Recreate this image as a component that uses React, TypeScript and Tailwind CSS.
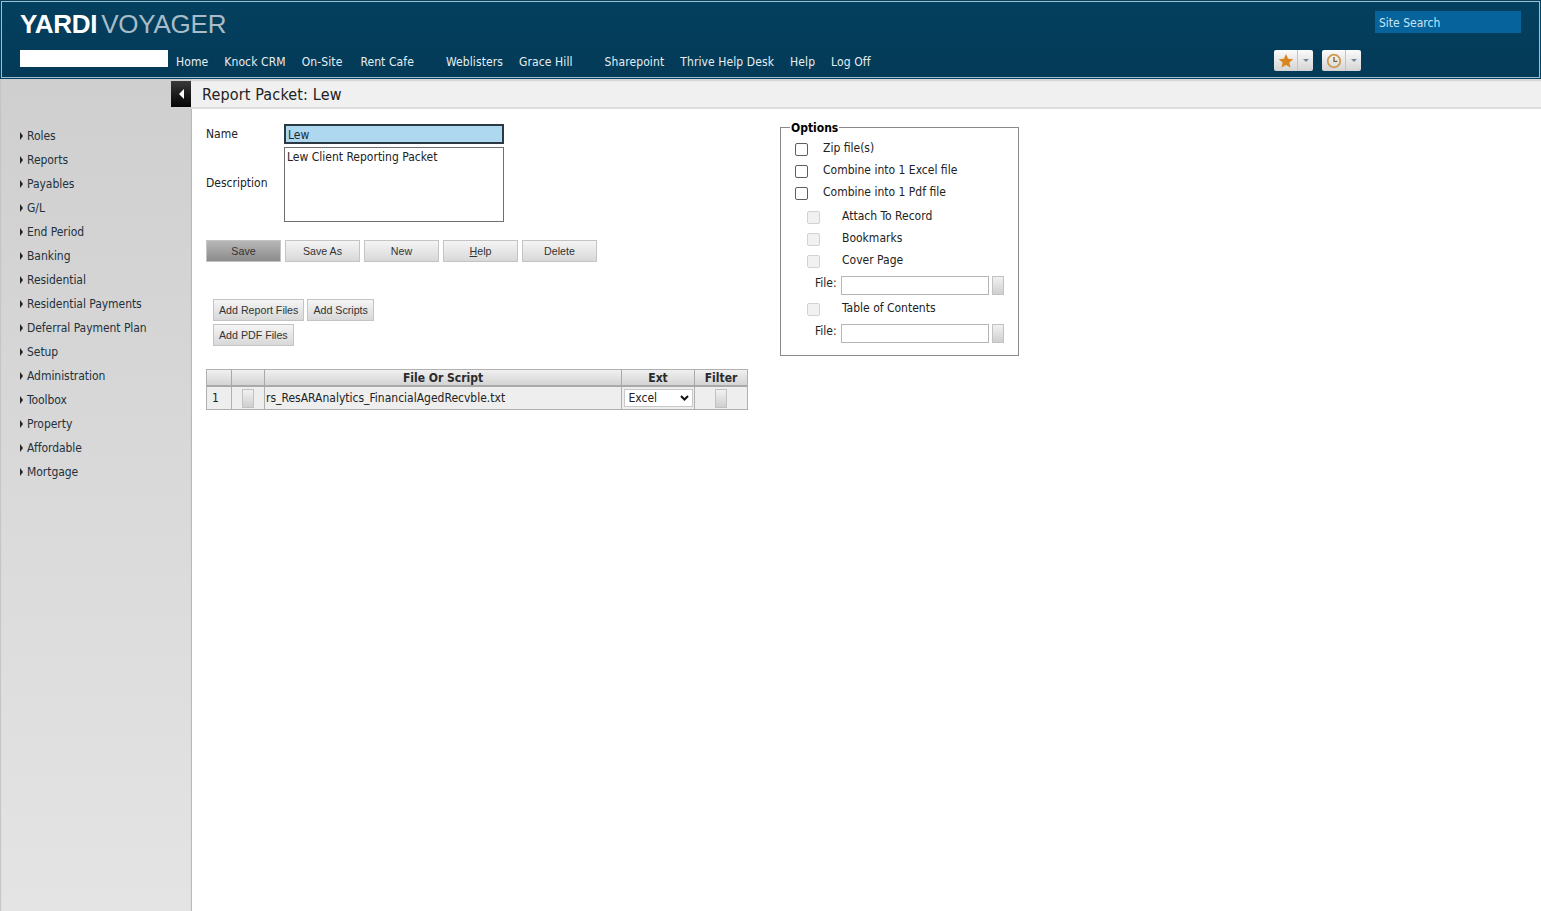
const uiFont = "[font-family:'DejaVu_Sans_Condensed','DejaVu_Sans',sans-serif] [font-stretch:condensed]"

const navItems = [
  { label: 'Home', gap: '' },
  { label: 'Knock CRM', gap: '' },
  { label: 'On-Site', gap: '' },
  { label: 'Rent Cafe', gap: 'ml-[2px]' },
  { label: 'Weblisters', gap: 'ml-[16px]' },
  { label: 'Grace Hill', gap: '' },
  { label: 'Sharepoint', gap: 'ml-[16px]' },
  { label: 'Thrive Help Desk', gap: '' },
  { label: 'Help', gap: '' },
  { label: 'Log Off', gap: '' },
]

const sideItems = [
  'Roles',
  'Reports',
  'Payables',
  'G/L',
  'End Period',
  'Banking',
  'Residential',
  'Residential Payments',
  'Deferral Payment Plan',
  'Setup',
  'Administration',
  'Toolbox',
  'Property',
  'Affordable',
  'Mortgage',
]

const HeaderDropdown = ({ children }: { children: React.ReactNode }) => (
  <div className="flex h-[21px] w-[39px] rounded-[2px] bg-gradient-to-b from-[#fbfbfb] to-[#d4d4d4]">
    <div className="flex w-[24px] items-center justify-center border-r border-[#c4c4c4]">{children}</div>
    <div className="flex flex-1 items-center justify-center">
      <span className="h-0 w-0 border-x-[3px] border-t-[3px] border-x-transparent border-t-[#72889c]" />
    </div>
  </div>
)

const Header = () => (
  <header className="flex h-[79px] shrink-0 flex-col justify-between border border-[#04405f] bg-gradient-to-b from-[#04405f] to-[#033a57] px-[19px] shadow-[inset_0_0_0_1px_#9fc0cc]">
    <div className="flex items-start justify-between">
      <div className="mt-[8px] flex font-['Liberation_Sans',sans-serif] text-[26px] leading-[30px] tracking-[-0.25px]">
        <span className="font-bold text-white">YARDI</span>
        <span className="ml-[4px] text-[#a9bcc7]">VOYAGER</span>
      </div>
      <div className={`mt-[10px] flex h-[22px] w-[146px] items-center bg-[#06639c] px-[4px] pt-[2px] text-[12px] text-[#c6e4f5] ${uiFont}`}>
        Site Search
      </div>
    </div>
    <div className="mb-[6px] flex items-end">
      <div className="mb-[5px] h-[17px] w-[148px] bg-white" />
      <nav className={`ml-[8px] flex flex-1 gap-[16px] pb-[3px] text-[12px] leading-[14px] font-medium tracking-[0.1px] text-[#e6eef2] ${uiFont}`}>
        {navItems.map((item) => (
          <span key={item.label} className={item.gap}>
            {item.label}
          </span>
        ))}
      </nav>
      <div className="mr-[160px] mb-px flex gap-[9px]">
        <HeaderDropdown>
          <svg width="16" height="16" viewBox="0 0 24 24" fill="#d9861f">
            <path d="M12 1.5l3.2 7 7.6.8-5.7 5.1 1.6 7.5L12 18l-6.7 3.9 1.6-7.5L1.2 9.3l7.6-.8z" />
          </svg>
        </HeaderDropdown>
        <HeaderDropdown>
          <svg width="16" height="16" viewBox="0 0 16 16" fill="none" stroke="#cf9a4e" strokeWidth="1.8">
            <circle cx="8" cy="8" r="6.3" />
            <path d="M8 4v4.3h3.4" stroke="#7d6238" strokeWidth="1.3" />
          </svg>
        </HeaderDropdown>
      </div>
    </div>
  </header>
)

const Sidebar = () => (
  <aside className={`flex w-[192px] shrink-0 flex-col bg-gradient-to-b from-[#cfcfcf] to-[#e4e4e4] shadow-[inset_-2px_0_1px_-1px_#b5b5b5,inset_2px_0_1px_-1px_#c4c4c4] ${uiFont}`}>
    <div className="flex justify-end pr-px">
      <button type="button" className="mt-[2px] flex h-[26px] w-[20px] items-center justify-center bg-gradient-to-b from-[#3a3a3a] to-[#050505]">
        <span className="h-0 w-0 border-y-[5px] border-r-[5px] border-y-transparent border-r-white" />
      </button>
    </div>
    <ul className="mt-[17px] pl-[20px] text-[12px] tracking-[-0.05px] text-[#22313c]">
      {sideItems.map((item) => (
        <li key={item} className="flex h-[24px] items-center gap-[4px]">
          <span className="h-0 w-0 border-y-[4px] border-l-[3px] border-y-transparent border-l-[#222]" />
          {item}
        </li>
      ))}
    </ul>
  </aside>
)

const GreyButton = ({ children, primary = false, wide = false }: { children: React.ReactNode; primary?: boolean; wide?: boolean }) => (
  <button
    type="button"
    className={`h-[22px] border border-[#c4c4c4] font-['Liberation_Sans',sans-serif] text-[10.67px] text-[#333] ${wide ? 'w-[75px]' : 'px-[5px]'} ${
      primary ? 'bg-gradient-to-b from-[#b8b8b8] to-[#8b8b8b]' : 'bg-gradient-to-b from-[#f5f5f5] to-[#d8d8d8]'
    }`}
  >
    {children}
  </button>
)

const SmallGreyButton = ({ className = '' }: { className?: string }) => (
  <span className={`block border border-[#c2c2c2] bg-gradient-to-b from-[#f1f1f1] to-[#cfcfcf] ${className}`} />
)

const Check = ({ disabled = false }: { disabled?: boolean }) => (
  <input
    type="checkbox"
    disabled={disabled}
    className={`h-[13px] w-[13px] appearance-none rounded-[2px] border ${disabled ? 'border-[#d2d2d2] bg-[#f1f1f1]' : 'border-[#5e5e5e] bg-white'}`}
  />
)

const OptionRow = ({ label, disabled = false }: { label: string; disabled?: boolean }) => (
  <div className={`flex h-[22px] items-center ${disabled ? 'pl-[15px]' : 'pl-[3px]'}`}>
    <span className="mt-[2px] flex">
      <Check disabled={disabled} />
    </span>
    <span className={disabled ? 'ml-[22px]' : 'ml-[15px]'}>{label}</span>
  </div>
)

const FileRow = () => (
  <div className="flex h-[26px] items-center pl-[23px]">
    <span className="w-[26px] pb-[3px]">File:</span>
    <span className="mt-[2px] h-[19px] w-[148px] border border-[#b5b5b5] bg-white" />
    <SmallGreyButton className="mt-[2px] ml-[3px] h-[19px] w-[12px]" />
  </div>
)

const Options = () => (
  <fieldset className="mt-[11px] ml-[32px] h-[236px] w-[239px] border border-[#8a8a8a] pr-[8px] pl-[11px]">
    <legend className="-ml-[2px] px-px pt-[2px] text-[12px] leading-[13px] font-bold text-black">Options</legend>
    <div className="mt-[2px] text-[12px] text-[#222]">
      <OptionRow label="Zip file(s)" />
      <OptionRow label="Combine into 1 Excel file" />
      <OptionRow label="Combine into 1 Pdf file" />
      <div className="mt-[2px]">
        <OptionRow label="Attach To Record" disabled />
        <OptionRow label="Bookmarks" disabled />
        <OptionRow label="Cover Page" disabled />
        <FileRow />
        <OptionRow label="Table of Contents" disabled />
        <FileRow />
      </div>
    </div>
  </fieldset>
)

const PacketForm = () => (
  <div className="w-[542px] pt-[15px] text-[12px] text-[#222]">
    <div className="grid grid-cols-[78px_220px] gap-y-[3px]">
      <span className="pt-px">Name</span>
      <div className="flex h-[20px] items-center border-2 border-[#2b3a42] bg-[#aed8f0] pt-[2px] pl-[2px] text-[#1c2a33]">Lew</div>
      <span className="self-center pb-[4px]">Description</span>
      <div className="h-[75px] border border-[#6f6f6f] bg-white px-[2px] pt-[1px] leading-[17px]">Lew Client Reporting Packet</div>
    </div>
    <div className="mt-[18px] flex gap-[4px]">
      <GreyButton primary wide>Save</GreyButton>
      <GreyButton wide>Save As</GreyButton>
      <GreyButton wide>New</GreyButton>
      <GreyButton wide><span className="underline">H</span>elp</GreyButton>
      <GreyButton wide>Delete</GreyButton>
    </div>
    <div className="mt-[37px] ml-[7px] flex flex-col gap-[3px]">
      <div className="flex gap-[3px]">
        <GreyButton>Add Report Files</GreyButton>
        <GreyButton>Add Scripts</GreyButton>
      </div>
      <div className="flex">
        <GreyButton>Add PDF Files</GreyButton>
      </div>
    </div>
    <div className="mt-[23px] border border-[#b0b0b0]">
      <div className="grid h-[17px] grid-cols-[24px_33px_357px_73px_1fr] border-b-2 border-[#a9a9a9] bg-gradient-to-b from-[#f0f0f0] to-[#d4d4d4] text-center leading-[17px] font-bold text-[#2b2b2b]">
        <span />
        <span className="border-l border-[#a9a9a9]" />
        <span className="border-l border-[#a9a9a9]">File Or Script</span>
        <span className="border-l border-[#a9a9a9]">Ext</span>
        <span className="border-l border-[#a9a9a9]">Filter</span>
      </div>
      <div className="grid h-[22px] grid-cols-[24px_33px_357px_73px_1fr] items-stretch bg-[#eeeeee]">
        <span className="flex items-center pl-[5px]">1</span>
        <span className="flex items-center justify-center border-l border-[#b0b0b0]">
          <SmallGreyButton className="h-[19px] w-[12px]" />
        </span>
        <span className="flex items-center border-l border-[#b0b0b0] pl-px">rs_ResARAnalytics_FinancialAgedRecvble.txt</span>
        <span className="flex items-center justify-center border-l border-[#b0b0b0]">
          <span className="flex h-[18px] w-[69px] items-center justify-between border border-[#c8c8c8] bg-white pr-[3px] pl-[4px]">
            Excel
            <svg width="9" height="6" viewBox="0 0 9 6" fill="none" stroke="#111" strokeWidth="2">
              <path d="M1 1l3.5 3.5L8 1" />
            </svg>
          </span>
        </span>
        <span className="flex items-center justify-center border-l border-[#b0b0b0]">
          <SmallGreyButton className="h-[19px] w-[12px]" />
        </span>
      </div>
    </div>
  </div>
)

export default function App() {
  return (
    <div className={`flex h-screen flex-col overflow-hidden bg-white ${uiFont}`}>
      <Header />
      <div className="flex min-h-0 flex-1">
        <Sidebar />
        <main className="-ml-px flex min-w-0 flex-1 flex-col">
          <div className="flex h-[30px] shrink-0 items-center border-b-2 border-[#dcdcdc] bg-gradient-to-b from-[#d8d8d8] from-[7%] to-[#f0f0f0] to-[10%] pt-[3px] pl-[11px] text-[16px] tracking-[0.15px] text-[#222]">
            Report Packet: Lew
          </div>
          <div className="flex pl-[15px]">
            <PacketForm />
            <Options />
          </div>
        </main>
      </div>
    </div>
  )
}
